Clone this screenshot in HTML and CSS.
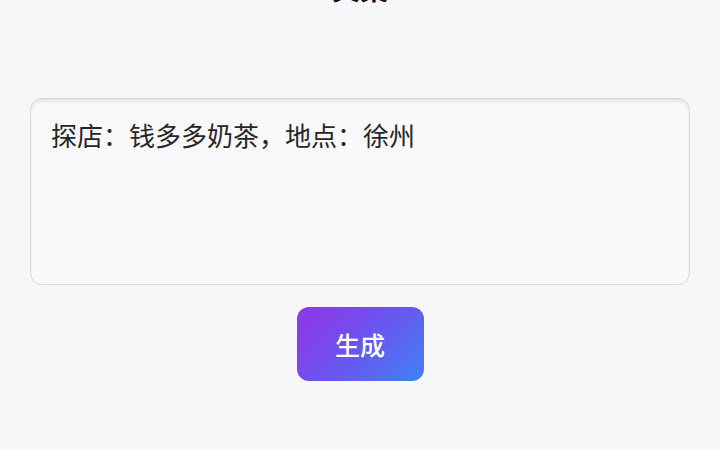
FILE: index.html
```html
<!DOCTYPE html>
<html lang="zh-CN">
<head>
<meta charset="utf-8">
<title>生成</title>
<link rel="stylesheet" href="styles.css">
</head>
<body>
<main class="page">
  <h1 class="title">文案</h1>
  <textarea class="prompt">探店：钱多多奶茶，地点：徐州</textarea>
  <div class="actions">
    <button class="generate">生成</button>
  </div>
</main>
</body>
</html>
```

FILE: styles.css
```css
html, body {
  margin: 0;
  padding: 0;
  background: #f7f7fa;
  height: 100%;
  overflow: hidden;
}

.page {
  display: flex;
  flex-direction: column;
  padding: 0 30px;
  font-family: "Noto Sans CJK SC", "Noto Sans", sans-serif;
}

.title {
  margin: -30px 0 0;
  height: 36px;
  line-height: 36px;
  font-size: 28px;
  font-weight: 700;
  text-align: center;
  color: #111;
}

.prompt {
  margin-top: 92px;
  box-sizing: border-box;
  width: 660px;
  height: 187px;
  padding: 18px 20px;
  border: 1.5px solid #d7d7db;
  border-radius: 12px;
  background: #f9f9fb;
  box-shadow: inset 0 4px 4px -2px rgba(0, 0, 0, 0.11);
  font-family: "Noto Sans CJK SC", "Noto Sans", sans-serif;
  font-size: 26px;
  line-height: 36px;
  color: #262626;
  resize: none;
  outline: none;
}

.actions {
  display: flex;
  justify-content: center;
  margin-top: 22px;
}

.generate {
  width: 127px;
  height: 74px;
  border: none;
  border-radius: 12px;
  background: linear-gradient(135deg, #9136e6 0%, #6a55ee 50%, #3f82f4 100%);
  color: #fff;
  font-family: "Noto Sans CJK SC", "Noto Sans", sans-serif;
  font-size: 25px;
  font-weight: 500;
  cursor: pointer;
}
```
